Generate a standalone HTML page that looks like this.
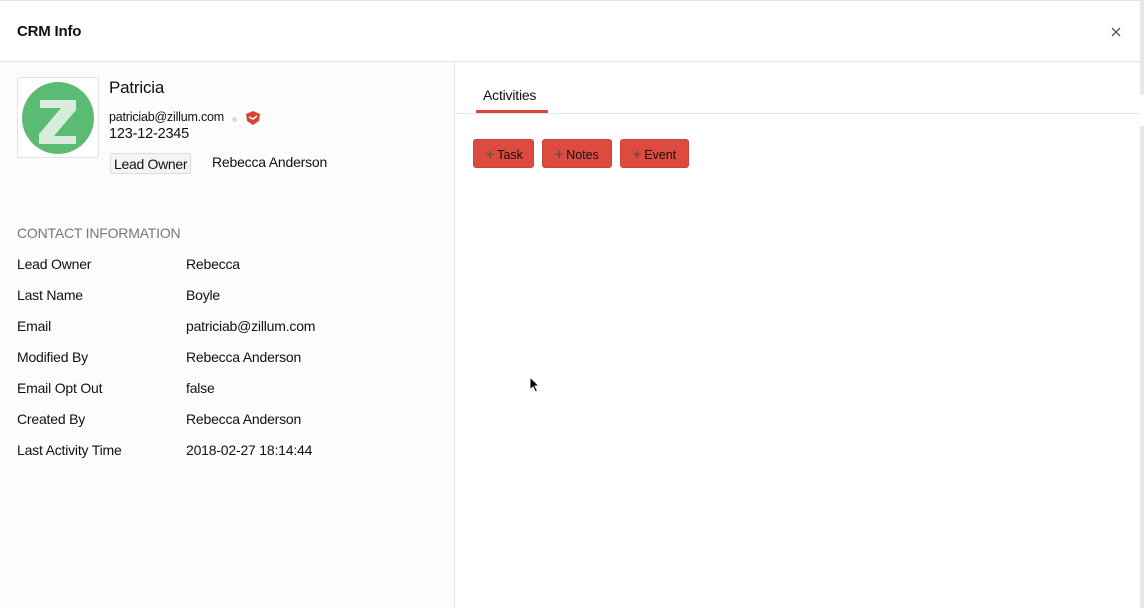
<!DOCTYPE html>
<html><head><meta charset="utf-8"><style>
*{margin:0;padding:0;box-sizing:border-box}
body{width:1144px;height:608px;overflow:hidden;background:#fff;font-family:"Liberation Sans",sans-serif;color:#111;position:relative}
.hdr{position:absolute;left:0;top:0;width:1140px;height:62px;border-top:1px solid #e6e6e6;border-bottom:1px solid #e6e6e6;background:#fff}
.hdr h1{position:absolute;left:17px;top:22px;font-size:15px;font-weight:bold;letter-spacing:-0.2px}
.close{position:absolute;left:1109px;top:24px;width:14px;height:14px}
.strip{position:absolute;left:1140px;top:0;width:4px;height:95px;background:#e8e8e8}
.strip2{position:absolute;left:1140px;top:126px;width:4px;height:482px;background:#e8e8e8}
.left{position:absolute;left:0;top:62px;width:455px;height:546px;background:#fcfcfb;border-right:1px solid #e6e6e6}
.t{position:absolute;font-size:14px;white-space:nowrap;letter-spacing:-0.2px}
.avatar{position:absolute;left:17px;top:77px;width:82px;height:81px;border:1px solid #e2e2e2;border-radius:2px;background:#fff}
.avatar .c{position:absolute;left:4px;top:4px;width:72px;height:72px;border-radius:50%;background:#5cbb73}
.tag{position:absolute;left:110px;top:153px;width:81px;height:21px;border:1px solid #ddd;background:#f4f4f4;border-radius:2px;font-size:14px;padding:2px 0 0 3px;white-space:nowrap;letter-spacing:-0.3px}
.tabline{position:absolute;left:456px;top:113px;width:684px;height:1px;background:#e6e6e6}
.tabu{position:absolute;left:476px;top:110px;width:72px;height:3px;background:#d9453a}
.btn{position:absolute;top:139px;height:29px;background:#dd4b40;border:1px solid #c9443a;border-radius:3px;font-size:12.5px;color:#111;padding-top:6px;white-space:nowrap}
.btn span{color:#6a5050;font-weight:bold;font-size:14px;margin-right:3px}
</style></head><body>
<div class="hdr"><h1>CRM Info</h1>
<svg class="close" viewBox="0 0 14 14"><path d="M3 3L11 11M11 3L3 11" stroke="#555" stroke-width="1.3"/></svg></div>
<div class="strip"></div><div class="strip2"></div>
<div class="left"></div>
<div class="avatar"><div class="c">
<svg width="72" height="72" viewBox="0 0 72 72"><path d="M18 18H54V28L32 54H54V62H17V52L39 26H18Z" fill="#e4f2e7" opacity="0.9"/></svg></div></div>
<div class="t" style="left:109px;top:78px;font-size:17px">Patricia</div>
<div class="t" style="left:109px;top:110px;font-size:12.5px">patriciab@zillum.com</div>
<div style="position:absolute;left:232px;top:117px;width:5px;height:5px;border-radius:50%;background:#ddd"></div>
<svg style="position:absolute;left:245px;top:110px" width="16" height="16" viewBox="0 0 16 16"><path d="M8 1L15 4L14 11L8 15L2 11L1 4Z" fill="#d9453a"/><path d="M4 7L8 9L12 6" stroke="#fff" stroke-width="1.5" fill="none"/></svg>
<div class="t" style="left:109px;top:126px;font-size:14.5px">123-12-2345</div>
<div class="tag">Lead Owner</div>
<div class="t" style="left:212px;top:154px">Rebecca Anderson</div>
<div class="t" style="left:17px;top:225px;color:#777">CONTACT INFORMATION</div>
<div class="t" style="left:17px;top:256px">Lead Owner</div><div class="t" style="left:186px;top:256px">Rebecca</div>
<div class="t" style="left:17px;top:287px">Last Name</div><div class="t" style="left:186px;top:287px">Boyle</div>
<div class="t" style="left:17px;top:318px">Email</div><div class="t" style="left:186px;top:318px">patriciab@zillum.com</div>
<div class="t" style="left:17px;top:349px">Modified By</div><div class="t" style="left:186px;top:349px">Rebecca Anderson</div>
<div class="t" style="left:17px;top:380px">Email Opt Out</div><div class="t" style="left:186px;top:380px">false</div>
<div class="t" style="left:17px;top:411px">Created By</div><div class="t" style="left:186px;top:411px">Rebecca Anderson</div>
<div class="t" style="left:17px;top:442px">Last Activity Time</div><div class="t" style="left:186px;top:442px">2018-02-27 18:14:44</div>
<div class="t" style="left:483px;top:87px">Activities</div>
<div class="tabline"></div><div class="tabu"></div>
<div class="btn" style="left:473px;width:61px;padding-left:12px"><span>+</span>Task</div>
<div class="btn" style="left:542px;width:70px;padding-left:12px"><span>+</span>Notes</div>
<div class="btn" style="left:620px;width:69px;padding-left:12px"><span>+</span>Event</div>
<svg style="position:absolute;left:529px;top:376px" width="12" height="18" viewBox="0 0 12 18"><path d="M1 1V14L4 11L6.5 16L8.5 15L6 10H10Z" fill="#000" stroke="#fff" stroke-width="1"/></svg>
</body></html>
